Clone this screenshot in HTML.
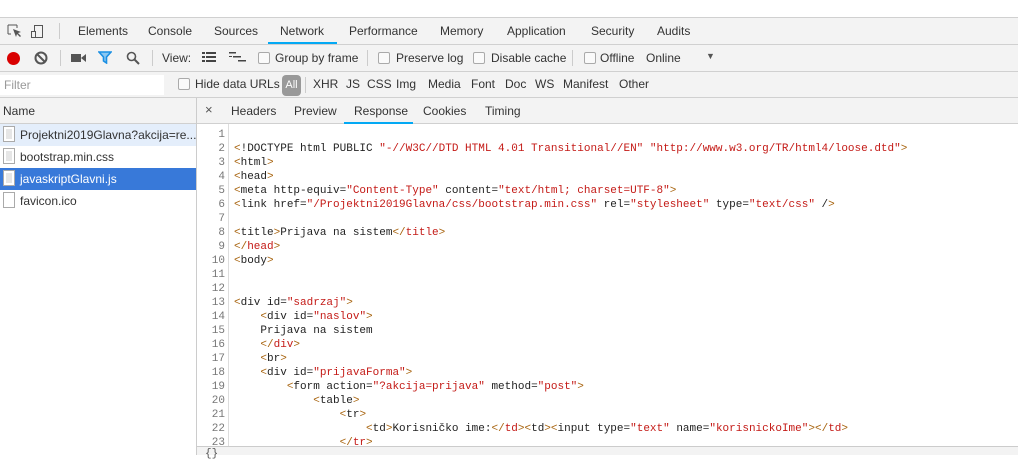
<!DOCTYPE html>
<html><head><meta charset="utf-8"><style>
*{margin:0;padding:0;box-sizing:border-box}
body{width:1018px;height:455px;overflow:hidden;background:#fff;font-family:"Liberation Sans",sans-serif;font-size:12px;color:#333;position:relative}
.a{position:absolute;white-space:pre}
.bar{position:absolute;left:0;width:1018px;background:#f3f3f3;border-bottom:1px solid #d0d0d0}
.sep{position:absolute;width:1px;height:16px;background:#ccc}
.cb{position:absolute;width:12px;height:12px;border:1px solid #aaa;border-radius:2px;background:#fafafa}
.code{position:absolute;left:234px;top:128px;font-family:"Liberation Mono",monospace;font-size:11px;line-height:14px;color:#222;white-space:pre}
.ln{position:absolute;left:196px;width:29px;top:128px;font-family:"Liberation Mono",monospace;font-size:11px;line-height:14px;color:#777;text-align:right;white-space:pre}
.p{color:#a8640f}.v{color:#c41a16}.c{color:#c41a16}
</style></head><body>
<div class="bar" style="top:17px;height:28px;border-top:1px solid #d0d0d0"></div>
<div class="bar" style="top:45px;height:27px"></div>
<div class="bar" style="top:72px;height:26px"></div>
<div class="bar" style="top:98px;height:26px"></div>
<svg class="a" style="left:6px;top:23px" width="40" height="18"><path d="M2 2h9M2 2v9M2 11h3M11 2v3" stroke="#555" fill="none"/><path d="M7 6l8 3-3 1 3 3-1 1-3-3-1 3z" fill="#555"/><rect x="28.5" y="2.5" width="8" height="12" stroke="#555" fill="none"/><rect x="25.5" y="8.5" width="4" height="6" stroke="#555" fill="#f3f3f3"/></svg>
<div class="sep" style="left:59px;top:23px"></div>
<div class="a" style="left:78px;top:24px">Elements</div>
<div class="a" style="left:148px;top:24px">Console</div>
<div class="a" style="left:214px;top:24px">Sources</div>
<div class="a" style="left:280px;top:24px">Network</div>
<div class="a" style="left:268px;top:42px;width:69px;height:2px;background:#03a9f4"></div>
<div class="a" style="left:349px;top:24px">Performance</div>
<div class="a" style="left:440px;top:24px">Memory</div>
<div class="a" style="left:507px;top:24px">Application</div>
<div class="a" style="left:591px;top:24px">Security</div>
<div class="a" style="left:657px;top:24px">Audits</div>
<div class="a" style="left:7px;top:52px;width:13px;height:13px;border-radius:50%;background:#d90000"></div>
<svg class="a" style="left:34px;top:51px" width="14" height="14"><circle cx="7" cy="7" r="5.5" stroke="#555" stroke-width="2" fill="none"/><path d="M3 3l8 8" stroke="#555" stroke-width="2"/></svg>
<div class="sep" style="left:60px;top:50px"></div>
<svg class="a" style="left:71px;top:53px" width="16" height="10"><rect x="0" y="1" width="10" height="8" fill="#555"/><path d="M10 5l5-4v8z" fill="#555"/></svg>
<svg class="a" style="left:98px;top:51px" width="14" height="13"><path d="M1 1h12l-4.5 5v6l-3-2v-4z" stroke="#1a8fe3" stroke-width="1.6" fill="#8cc8f2"/></svg>
<svg class="a" style="left:126px;top:51px" width="14" height="14"><circle cx="5.5" cy="5.5" r="4" stroke="#555" stroke-width="1.6" fill="none"/><path d="M8.5 8.5l4.5 4.5" stroke="#555" stroke-width="2"/></svg>
<div class="sep" style="left:152px;top:50px"></div>
<div class="a" style="left:162px;top:51px">View:</div>
<svg class="a" style="left:202px;top:52px" width="14" height="11"><g fill="#444"><rect x="0" y="0" width="3" height="2"/><rect x="4" y="0" width="10" height="2"/><rect x="0" y="4" width="3" height="2"/><rect x="4" y="4" width="10" height="2"/><rect x="0" y="8" width="3" height="2"/><rect x="4" y="8" width="10" height="2"/></g></svg>
<svg class="a" style="left:229px;top:52px" width="17" height="11"><g fill="#444"><rect x="0" y="0" width="7" height="1.5"/><rect x="4" y="4" width="8" height="1.5"/><rect x="9" y="8" width="8" height="1.5"/><rect x="0" y="4" width="3" height="1"/></g></svg>
<div class="cb" style="left:258px;top:52px"></div>
<div class="a" style="left:275px;top:51px">Group by frame</div>
<div class="sep" style="left:367px;top:50px"></div>
<div class="cb" style="left:378px;top:52px"></div>
<div class="a" style="left:396px;top:51px">Preserve log</div>
<div class="cb" style="left:473px;top:52px"></div>
<div class="a" style="left:491px;top:51px">Disable cache</div>
<div class="sep" style="left:572px;top:50px"></div>
<div class="cb" style="left:584px;top:52px"></div>
<div class="a" style="left:600px;top:51px">Offline</div>
<div class="a" style="left:646px;top:51px">Online</div>
<div class="a" style="left:706px;top:51px;font-size:9px;color:#555">▼</div>
<div class="a" style="left:0;top:75px;width:164px;height:20px;background:#fff"></div>
<div class="a" style="left:4px;top:78px;color:#999">Filter</div>
<div class="cb" style="left:178px;top:78px"></div>
<div class="a" style="left:195px;top:77px">Hide data URLs</div>
<div class="a" style="left:282px;top:75px;width:19px;height:21px;border-radius:4px;background:#999;color:#fff;font-size:11px;line-height:21px;text-align:center">All</div>
<div class="sep" style="left:305px;top:77px"></div>
<div class="a" style="left:313px;top:77px">XHR</div>
<div class="a" style="left:346px;top:77px">JS</div>
<div class="a" style="left:367px;top:77px">CSS</div>
<div class="a" style="left:396px;top:77px">Img</div>
<div class="a" style="left:428px;top:77px">Media</div>
<div class="a" style="left:471px;top:77px">Font</div>
<div class="a" style="left:505px;top:77px">Doc</div>
<div class="a" style="left:535px;top:77px">WS</div>
<div class="a" style="left:563px;top:77px">Manifest</div>
<div class="a" style="left:619px;top:77px">Other</div>
<div class="a" style="left:3px;top:104px">Name</div>
<div class="a" style="left:196px;top:98px;width:1px;height:357px;background:#ccc"></div>
<div class="a" style="left:205px;top:102px;font-size:13px;color:#555">×</div>
<div class="a" style="left:231px;top:104px">Headers</div>
<div class="a" style="left:294px;top:104px">Preview</div>
<div class="a" style="left:354px;top:104px">Response</div>
<div class="a" style="left:344px;top:122px;width:69px;height:2px;background:#03a9f4"></div>
<div class="a" style="left:423px;top:104px">Cookies</div>
<div class="a" style="left:485px;top:104px">Timing</div>
<div class="a" style="left:0;top:124px;width:196px;height:22px;background:#e4eefb"></div>
<div class="a" style="left:0;top:168px;width:196px;height:22px;background:#3879d9"></div>
<svg class="a" style="left:3px;top:126px" width="14" height="90"><g stroke="#aaa" fill="#fff"><rect x="0.5" y="0.5" width="11" height="15"/><rect x="0.5" y="22.5" width="11" height="15"/><rect x="0.5" y="44.5" width="11" height="15"/><rect x="0.5" y="66.5" width="11" height="15"/></g><g stroke="#ccc"><path d="M3 4h6M3 6h6M3 8h6M3 10h6M3 12h6M3 26h6M3 28h6M3 30h6M3 32h6M3 34h6M3 48h6M3 50h6M3 52h6M3 54h6M3 56h6"/></g></svg>
<div class="a" style="left:20px;top:128px">Projektni2019Glavna?akcija=re...</div>
<div class="a" style="left:20px;top:150px">bootstrap.min.css</div>
<div class="a" style="left:20px;top:172px;color:#fff">javaskriptGlavni.js</div>
<div class="a" style="left:20px;top:194px">favicon.ico</div>
<div class="a" style="left:228px;top:124px;width:1px;height:323px;background:#ddd"></div>
<div class="ln">1
2
3
4
5
6
7
8
9
10
11
12
13
14
15
16
17
18
19
20
21
22
23</div>
<div class="code">
<span class="p">&lt;</span>!DOCTYPE html PUBLIC <span class="v">"-//W3C//DTD HTML 4.01 Transitional//EN"</span> <span class="v">"http://www.w3.org/TR/html4/loose.dtd"</span><span class="p">&gt;</span>
<span class="p">&lt;</span>html<span class="p">&gt;</span>
<span class="p">&lt;</span>head<span class="p">&gt;</span>
<span class="p">&lt;</span>meta http-equiv=<span class="v">"Content-Type"</span> content=<span class="v">"text/html; charset=UTF-8"</span><span class="p">&gt;</span>
<span class="p">&lt;</span>link href=<span class="v">"/Projektni2019Glavna/css/bootstrap.min.css"</span> rel=<span class="v">"stylesheet"</span> type=<span class="v">"text/css"</span> /<span class="p">&gt;</span>

<span class="p">&lt;</span>title<span class="p">&gt;</span>Prijava na sistem<span class="p">&lt;/</span><span class="c">title</span><span class="p">&gt;</span>
<span class="p">&lt;/</span><span class="c">head</span><span class="p">&gt;</span>
<span class="p">&lt;</span>body<span class="p">&gt;</span>


<span class="p">&lt;</span>div id=<span class="v">"sadrzaj"</span><span class="p">&gt;</span>
    <span class="p">&lt;</span>div id=<span class="v">"naslov"</span><span class="p">&gt;</span>
    Prijava na sistem
    <span class="p">&lt;/</span><span class="c">div</span><span class="p">&gt;</span>
    <span class="p">&lt;</span>br<span class="p">&gt;</span>
    <span class="p">&lt;</span>div id=<span class="v">"prijavaForma"</span><span class="p">&gt;</span>
        <span class="p">&lt;</span>form action=<span class="v">"?akcija=prijava"</span> method=<span class="v">"post"</span><span class="p">&gt;</span>
            <span class="p">&lt;</span>table<span class="p">&gt;</span>
                <span class="p">&lt;</span>tr<span class="p">&gt;</span>
                    <span class="p">&lt;</span>td<span class="p">&gt;</span>Korisničko ime:<span class="p">&lt;/</span><span class="c">td</span><span class="p">&gt;&lt;</span>td<span class="p">&gt;&lt;</span>input type=<span class="v">"text"</span> name=<span class="v">"korisnickoIme"</span><span class="p">&gt;&lt;/</span><span class="c">td</span><span class="p">&gt;</span>
                <span class="p">&lt;/</span><span class="c">tr</span><span class="p">&gt;</span></div>
<div class="a" style="left:197px;top:446px;width:821px;height:9px;background:#f3f3f3;border-top:1px solid #ccc"></div>
<div class="a" style="left:0;top:446px;width:196px;height:9px;background:#fff"></div>
<div class="a" style="left:205px;top:448px;font-family:'Liberation Mono',monospace;font-size:11px;color:#555">{}</div>
</body></html>
